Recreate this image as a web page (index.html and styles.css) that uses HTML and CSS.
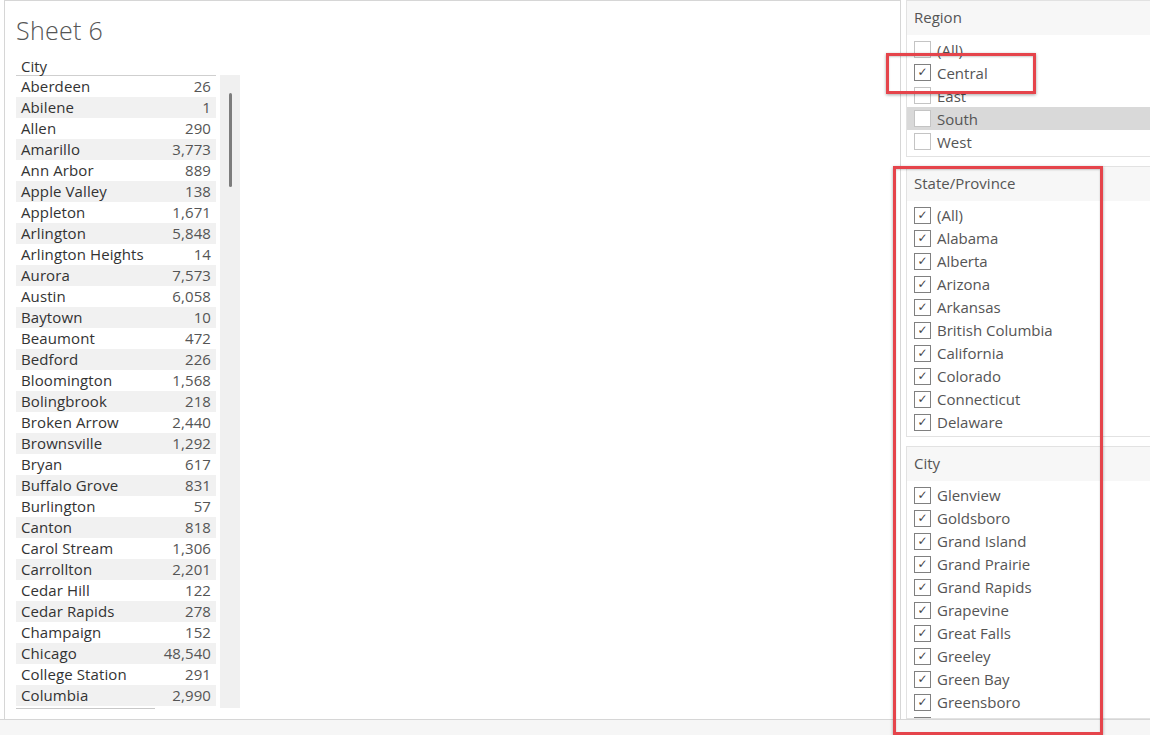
FILE: index.html
```html
<!DOCTYPE html>
<html>
<head>
<meta charset="utf-8">
<title>Sheet 6</title>
<link rel="stylesheet" href="styles.css">
</head>
<body>
<div class="workspace">
  <div class="sheet">
    <h1 class="sheet-title">Sheet 6</h1>
    <div class="table-wrap">
      <div class="table">
        <div class="table-head">City</div>
        <div class="row"><span>Aberdeen</span><span class="num">26</span></div>
        <div class="row"><span>Abilene</span><span class="num">1</span></div>
        <div class="row"><span>Allen</span><span class="num">290</span></div>
        <div class="row"><span>Amarillo</span><span class="num">3,773</span></div>
        <div class="row"><span>Ann Arbor</span><span class="num">889</span></div>
        <div class="row"><span>Apple Valley</span><span class="num">138</span></div>
        <div class="row"><span>Appleton</span><span class="num">1,671</span></div>
        <div class="row"><span>Arlington</span><span class="num">5,848</span></div>
        <div class="row"><span>Arlington Heights</span><span class="num">14</span></div>
        <div class="row"><span>Aurora</span><span class="num">7,573</span></div>
        <div class="row"><span>Austin</span><span class="num">6,058</span></div>
        <div class="row"><span>Baytown</span><span class="num">10</span></div>
        <div class="row"><span>Beaumont</span><span class="num">472</span></div>
        <div class="row"><span>Bedford</span><span class="num">226</span></div>
        <div class="row"><span>Bloomington</span><span class="num">1,568</span></div>
        <div class="row"><span>Bolingbrook</span><span class="num">218</span></div>
        <div class="row"><span>Broken Arrow</span><span class="num">2,440</span></div>
        <div class="row"><span>Brownsville</span><span class="num">1,292</span></div>
        <div class="row"><span>Bryan</span><span class="num">617</span></div>
        <div class="row"><span>Buffalo Grove</span><span class="num">831</span></div>
        <div class="row"><span>Burlington</span><span class="num">57</span></div>
        <div class="row"><span>Canton</span><span class="num">818</span></div>
        <div class="row"><span>Carol Stream</span><span class="num">1,306</span></div>
        <div class="row"><span>Carrollton</span><span class="num">2,201</span></div>
        <div class="row"><span>Cedar Hill</span><span class="num">122</span></div>
        <div class="row"><span>Cedar Rapids</span><span class="num">278</span></div>
        <div class="row"><span>Champaign</span><span class="num">152</span></div>
        <div class="row"><span>Chicago</span><span class="num">48,540</span></div>
        <div class="row"><span>College Station</span><span class="num">291</span></div>
        <div class="row"><span>Columbia</span><span class="num">2,990</span></div>
        <div class="hscroll"></div>
      </div>
      <div class="vscroll"><div class="vthumb"></div></div>
    </div>
  </div>

  <div class="side">
    <div class="card card-region">
      <div class="card-head">Region</div>
      <div class="card-list">
        <div class="item"><span class="box"></span>(All)</div>
        <div class="item"><span class="box on">✓</span>Central</div>
        <div class="item"><span class="box"></span>East</div>
        <div class="item hover"><span class="box"></span>South</div>
        <div class="item"><span class="box"></span>West</div>
      </div>
    </div>

    <div class="card card-state">
      <div class="card-head">State/Province</div>
      <div class="card-list">
        <div class="item"><span class="box on">✓</span>(All)</div>
        <div class="item"><span class="box on">✓</span>Alabama</div>
        <div class="item"><span class="box on">✓</span>Alberta</div>
        <div class="item"><span class="box on">✓</span>Arizona</div>
        <div class="item"><span class="box on">✓</span>Arkansas</div>
        <div class="item"><span class="box on">✓</span>British Columbia</div>
        <div class="item"><span class="box on">✓</span>California</div>
        <div class="item"><span class="box on">✓</span>Colorado</div>
        <div class="item"><span class="box on">✓</span>Connecticut</div>
        <div class="item"><span class="box on">✓</span>Delaware</div>
        <div class="item"><span class="box on"></span></div>
      </div>
    </div>

    <div class="card card-city">
      <div class="card-head">City</div>
      <div class="card-list">
        <div class="item"><span class="box on">✓</span>Glenview</div>
        <div class="item"><span class="box on">✓</span>Goldsboro</div>
        <div class="item"><span class="box on">✓</span>Grand Island</div>
        <div class="item"><span class="box on">✓</span>Grand Prairie</div>
        <div class="item"><span class="box on">✓</span>Grand Rapids</div>
        <div class="item"><span class="box on">✓</span>Grapevine</div>
        <div class="item"><span class="box on">✓</span>Great Falls</div>
        <div class="item"><span class="box on">✓</span>Greeley</div>
        <div class="item"><span class="box on">✓</span>Green Bay</div>
        <div class="item"><span class="box on">✓</span>Greensboro</div>
        <div class="item"><span class="box on"></span></div>
      </div>
    </div>
  </div>
</div>
<div class="status-strip"></div>

<div class="mark mark-region"></div>
<div class="mark mark-filters"></div>
</body>
</html>
```

FILE: styles.css
```css
* {
  box-sizing: border-box;
}

html, body {
  margin: 0;
  padding: 0;
  background: #ffffff;
  width: 1150px;
  height: 735px;
  overflow: hidden;
  font-family: "Open Sans", "Noto Sans", sans-serif;
}

.workspace {
  display: flex;
  height: 719px;
  padding-left: 4px;
}

/* worksheet frame */
.sheet {
  width: 897px;
  height: 719px;
  border: 1px solid #d6d6d6;
  border-bottom: none;
  padding-left: 11px;
}

.sheet-title {
  margin: 13px 0 0 0;
  font-size: 25px;
  line-height: 32px;
  font-weight: 300;
  color: #555555;
  letter-spacing: 0.3px;
}

.table-wrap {
  display: flex;
  align-items: flex-start;
  margin-top: 10px;
}

.table {
  width: 200px;
  position: relative;
}

.table-head {
  height: 20px;
  line-height: 20px;
  padding-left: 5px;
  font-size: 15px;
  color: #333333;
  border-bottom: 1px solid #cfcfcf;
}

.row {
  display: flex;
  justify-content: space-between;
  height: 21px;
  line-height: 21px;
  padding: 0 5px;
  font-size: 15px;
  font-weight: 500;
  letter-spacing: 0.1px;
  color: #333333;
}

.row:nth-of-type(odd) {
  background: #f1f1f1;
}

.row .num {
  font-weight: 400;
  color: #555555;
}

.hscroll {
  margin-top: 2px;
  width: 139px;
  height: 1px;
  background: #c8c8c8;
}

.vscroll {
  margin-left: 4px;
  margin-top: 19px;
  width: 20px;
  height: 633px;
  background: #f0f0f0;
  padding-top: 18px;
  padding-left: 9px;
}

.vthumb {
  width: 3px;
  height: 94px;
  background: #7d7d7d;
  border-radius: 2px;
}

/* filter panel */
.side {
  flex: 1;
  margin-left: 5px;
  display: flex;
  flex-direction: column;
  gap: 9px;
}

.card {
  border: 1px solid #e2e2e2;
  border-right: none;
  overflow: hidden;
  background: #ffffff;
}

.card-region {
  height: 157px;
}

.card-state {
  height: 272px;
}

.card-city {
  height: 274px;
}

.card-head {
  height: 34px;
  line-height: 32px;
  padding-left: 7px;
  font-size: 15px;
  color: #555555;
  background: #f7f7f7;
}

.card-list {
  padding-top: 3px;
}

.item {
  display: flex;
  align-items: center;
  height: 23px;
  padding-left: 7px;
  font-size: 15px;
  color: #555555;
}

.item.hover {
  background: #d9d9d9;
}

.box {
  width: 17px;
  height: 17px;
  border: 1px solid #808080;
  background: #ffffff;
  margin-right: 6px;
  font-size: 12px;
  line-height: 15px;
  text-align: center;
  color: #444444;
  font-family: "DejaVu Sans", sans-serif;
}

.item .box:not(.on) {
  border-color: #c4c4c4;
}

.status-strip {
  height: 16px;
  border-top: 1px solid #d6d6d6;
  background: #f6f6f6;
}

/* red highlight rectangles drawn over the filters */
.mark {
  position: absolute;
  border: 3px solid #e5444b;
  box-shadow: 0 1px 3px rgba(0, 0, 0, 0.35), inset 0 1px 2px rgba(0, 0, 0, 0.2);
}

.mark-region {
  left: 886px;
  top: 53px;
  width: 150px;
  height: 41px;
}

.mark-filters {
  left: 893px;
  top: 166px;
  width: 210px;
  height: 569px;
}
```
